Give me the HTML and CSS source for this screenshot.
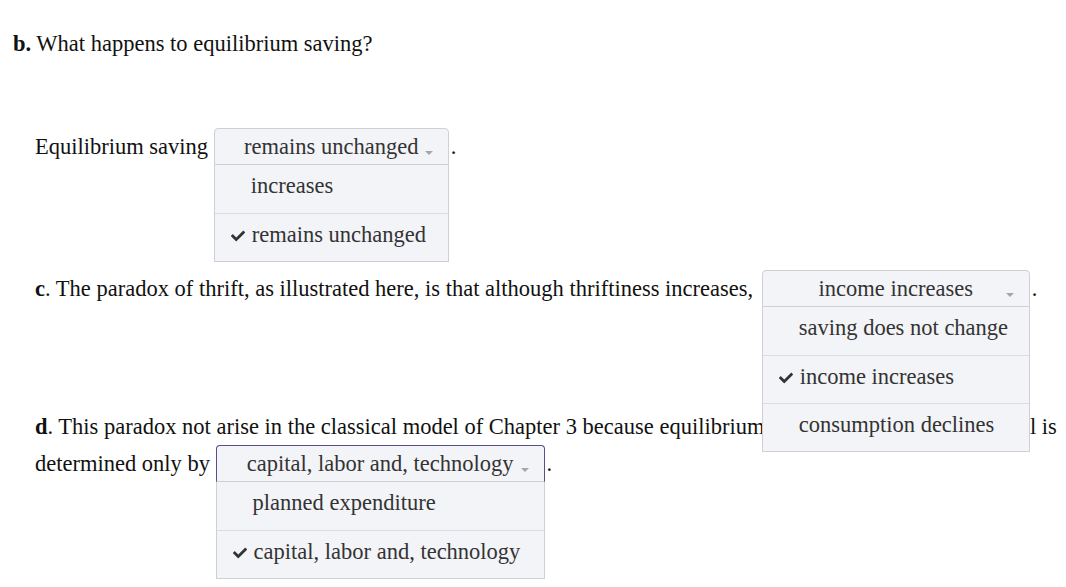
FILE: index.html
```html
<!DOCTYPE html>
<html lang="en">
<head>
    <meta charset="UTF-8">
    <meta name="viewport" content="width=device-width, initial-scale=1.0">
    <title>Paradox of thrift</title>
    <link rel="stylesheet" href="styles.css">
</head>
<body>
    <div class="question">
        <p class="part-title"><b>b.</b> What happens to equilibrium saving?</p>

        <p class="answer">
            Equilibrium saving
            <span class="dropdown dropdown-b">
                <span class="dropdown-button">remains unchanged<span class="caret"></span></span>
                <span class="dropdown-menu">
                    <span class="option">increases</span>
                    <span class="option selected"><svg class="check" viewBox="0 0 512 512"><path d="M173.9 439.4l-166.4-166.4c-10-10-10-26.2 0-36.2l36.2-36.2c10-10 26.2-10 36.2 0L192 312.7 432.1 72.6c10-10 26.2-10 36.2 0l36.2 36.2c10 10 10 26.2 0 36.2l-294.4 294.4c-10 10-26.2 10-36.2 0z"/></svg>remains unchanged</span>
                </span>
            </span>.
        </p>

        <p class="answer answer-c">
            <b>c</b>. The paradox of thrift, as illustrated here, is that although thriftiness increases,
            <span class="dropdown dropdown-c">
                <span class="dropdown-button">income increases<span class="caret"></span></span>
                <span class="dropdown-menu">
                    <span class="option">saving does not change</span>
                    <span class="option selected"><svg class="check" viewBox="0 0 512 512"><path d="M173.9 439.4l-166.4-166.4c-10-10-10-26.2 0-36.2l36.2-36.2c10-10 26.2-10 36.2 0L192 312.7 432.1 72.6c10-10 26.2-10 36.2 0l36.2 36.2c10 10 10 26.2 0 36.2l-294.4 294.4c-10 10-26.2 10-36.2 0z"/></svg>income increases</span>
                    <span class="option">consumption declines</span>
                </span>
            </span>.
        </p>

        <p class="answer answer-d">
            <b>d</b>. This paradox not arise in the classical model of Chapter 3 because equilibrium income in the classical model is
            determined only by
            <span class="dropdown dropdown-d focused">
                <span class="dropdown-button">capital, labor and, technology<span class="caret"></span></span>
                <span class="dropdown-menu">
                    <span class="option">planned expenditure</span>
                    <span class="option selected"><svg class="check" viewBox="0 0 512 512"><path d="M173.9 439.4l-166.4-166.4c-10-10-10-26.2 0-36.2l36.2-36.2c10-10 26.2-10 36.2 0L192 312.7 432.1 72.6c10-10 26.2-10 36.2 0l36.2 36.2c10 10 10 26.2 0 36.2l-294.4 294.4c-10 10-26.2 10-36.2 0z"/></svg>capital, labor and, technology</span>
                </span>
            </span>.
        </p>
    </div>
</body>
</html>
```

FILE: styles.css
```css
body {
    font-family: 'Liberation Serif', 'Times New Roman', serif;
    font-size: 22.5px;
    color: #111;
    background-color: #fff;
    margin: 0;
    padding: 0 5px 100px 13px;
}

.question p {
    margin: 0;
    line-height: 37px;
}

.part-title {
    margin-top: 25px !important;
}

.answer {
    padding-left: 22px;
    margin-top: 66px !important;
}

.answer-c {
    margin-top: 105px !important;
}

.answer-d {
    margin-top: 101px !important;
}

.dropdown {
    position: relative;
    display: inline-block;
    vertical-align: baseline;
    margin: 0 2px 0 0;
}

.dropdown-b {
    width: 235px;
}

.dropdown-c {
    width: 268px;
    margin-left: 3px;
}

.dropdown-d {
    width: 329px;
}

.dropdown-button {
    position: relative;
    display: block;
    height: 35px;
    line-height: 35px;
    text-align: center;
    color: #333;
    background-color: #f3f4f8;
    border: 1px solid #cfd0d6;
    border-radius: 4px 4px 0 0;
}

.focused .dropdown-button {
    border-color: #574e8f;
    border-bottom-color: #cfd0d6;
}

.caret {
    position: absolute;
    right: 15px;
    top: 22px;
    width: 0;
    height: 0;
    border-left: 4px solid transparent;
    border-right: 4px solid transparent;
    border-top: 4px solid #a5a5aa;
}

.dropdown-menu {
    position: absolute;
    left: 0;
    right: 0;
    top: 37px;
    z-index: 2;
    background-color: #f3f4f8;
    border: 1px solid #cfd0d6;
    border-top: none;
}

.option {
    display: block;
    height: 47px;
    line-height: 42px;
    padding-left: 36px;
    color: #333;
    white-space: nowrap;
    border-top: 1px solid #dcdde2;
}

.option:first-child {
    border-top: none;
    height: 48px;
}

.option.selected {
    padding-left: 15px;
}

.check {
    width: 16px;
    height: 14px;
    margin-right: 6px;
    fill: #333;
    vertical-align: -1px;
}
```
